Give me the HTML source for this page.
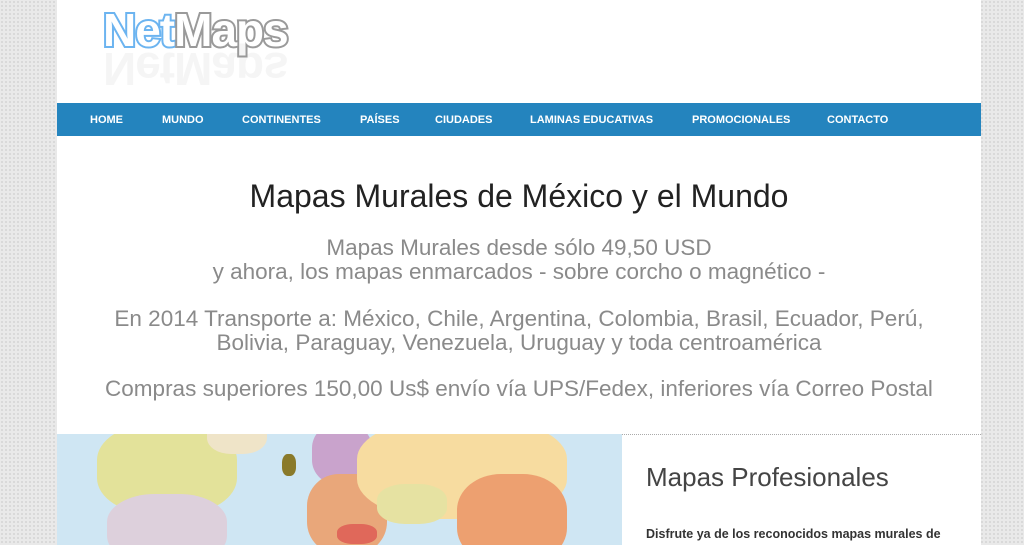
<!DOCTYPE html>
<html><head><meta charset="utf-8"><style>
body{margin:0;width:1024px;height:545px;overflow:hidden;background:#e9e9e9;background-image:radial-gradient(#d8d8d8 1px,transparent 1.2px);background-size:4px 4px;font-family:"Liberation Sans",sans-serif}
#wrap{position:absolute;left:57px;top:0;width:924px;height:545px;background:#fff}
.logo{position:absolute;left:46px;top:3px;font-size:46px;font-weight:bold;letter-spacing:-1px;color:#fff}
.logo .n{-webkit-text-stroke:4px #6cb4f0;paint-order:stroke fill}
.logo .m{-webkit-text-stroke:4px #9a9a9a;paint-order:stroke fill}
.refl{position:absolute;left:46px;top:42px;font-size:46px;font-weight:bold;letter-spacing:-1px;transform:scaleY(-1);opacity:.08;color:#888}
nav{position:absolute;left:0;top:103px;width:924px;height:33px;background:#2484be}
nav span{position:absolute;top:11px;color:#fff;font-size:11px;font-weight:bold}
h1{position:absolute;left:0;width:924px;top:178px;margin:0;text-align:center;font-weight:normal;font-size:32px;color:#222}
.g{position:absolute;left:0;width:924px;text-align:center;color:#8a8a8a;font-size:22.5px;line-height:24px}
.map{position:absolute;left:0;top:434px;width:565px;height:111px;background:#cfe6f3;overflow:hidden}
.map div{position:absolute;border-radius:40%}
.rule{position:absolute;left:565px;top:434px;width:359px;border-top:1px dotted #aaa}
h2{position:absolute;left:589px;top:462px;margin:0;font-weight:normal;font-size:26px;color:#444}
.p{position:absolute;left:589px;top:527px;font-size:12.5px;font-weight:bold;color:#333}
</style></head><body>
<div id="wrap">
<div class="logo"><span class="n">Net</span><span class="m">Maps</span></div>
<div class="refl">NetMaps</div>
<nav><span style="left:33px">HOME</span><span style="left:105px">MUNDO</span><span style="left:185px">CONTINENTES</span><span style="left:303px">PAÍSES</span><span style="left:378px">CIUDADES</span><span style="left:473px">LAMINAS EDUCATIVAS</span><span style="left:635px">PROMOCIONALES</span><span style="left:770px">CONTACTO</span></nav>
<h1>Mapas Murales de México y el Mundo</h1>
<div class="g" style="top:236px">Mapas Murales desde sólo 49,50 USD<br>y ahora, los mapas enmarcados - sobre corcho o magnético -</div>
<div class="g" style="top:307px">En 2014 Transporte a: México, Chile, Argentina, Colombia, Brasil, Ecuador, Perú,<br>Bolivia, Paraguay, Venezuela, Uruguay y toda centroamérica</div>
<div class="g" style="top:377px">Compras superiores 150,00 Us$ envío vía UPS/Fedex, inferiores vía Correo Postal</div>
<div class="map">
<div style="left:40px;top:-10px;width:140px;height:90px;background:#e3e29a"></div>
<div style="left:50px;top:60px;width:120px;height:70px;background:#ddd0dc"></div>
<div style="left:150px;top:-20px;width:60px;height:40px;background:#efe4c8"></div>
<div style="left:255px;top:-10px;width:60px;height:60px;background:#c9a3cc"></div>
<div style="left:250px;top:40px;width:80px;height:80px;background:#e9a77a"></div>
<div style="left:300px;top:-15px;width:210px;height:100px;background:#f7dca0"></div>
<div style="left:400px;top:40px;width:110px;height:90px;background:#eda070"></div>
<div style="left:320px;top:50px;width:70px;height:40px;background:#e6e2a2"></div>
<div style="left:280px;top:90px;width:40px;height:20px;background:#e0685a"></div>
<div style="left:225px;top:20px;width:14px;height:22px;background:#8a7a2a"></div>
</div>
<div class="rule"></div>
<h2>Mapas Profesionales</h2>
<div class="p">Disfrute ya de los reconocidos mapas murales de</div>
</div>
</body></html>
